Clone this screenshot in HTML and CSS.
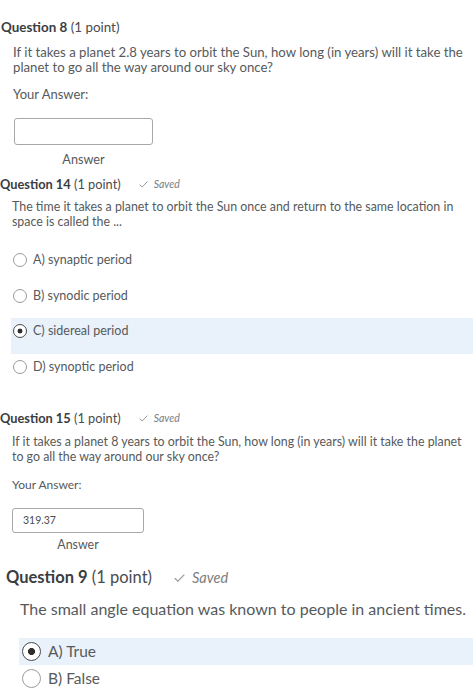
FILE: index.html
```html
<!DOCTYPE html>
<html lang="en">
<head>
  <meta charset="UTF-8">
  <meta name="viewport" content="width=device-width, initial-scale=1.0">
  <title>Quiz</title>
  <link rel="stylesheet" href="styles.css">
</head>
<body>
  <!-- Question 8 -->
  <div class="question q8">
    <div class="q-title"><b>Question 8</b> (1 point)</div>
    <p class="q-text">If it takes a planet 2.8 years to orbit the Sun, how long (in years) will it take the planet to go all the way around our sky once?</p>
    <p class="your-answer">Your Answer:</p>
    <div class="answer-box">
      <div class="answer-input"></div>
      <div class="answer-label">Answer</div>
    </div>
  </div>

  <!-- Question 14 -->
  <div class="question q14">
    <div class="q-title"><b>Question 14</b> (1 point)<span class="saved">
        <svg width="9" height="7" viewBox="0 0 9 7"><path d="M0.6 3.6 L3.2 6 L8.4 0.6" fill="none" stroke="#9a9a9a" stroke-width="1"/></svg>
        Saved
      </span></div>
    <p class="q-text">The time it takes a planet to orbit the Sun once and return to the same location in space is called the ...</p>
    <div class="options">
      <div class="option"><span class="radio"></span>A) synaptic period</div>
      <div class="option"><span class="radio"></span>B) synodic period</div>
      <div class="option selected"><span class="radio"></span>C) sidereal period</div>
      <div class="option"><span class="radio"></span>D) synoptic period</div>
    </div>
  </div>

  <!-- Question 15 -->
  <div class="question q15">
    <div class="q-title"><b>Question 15</b> (1 point)<span class="saved">
        <svg width="9" height="7" viewBox="0 0 9 7"><path d="M0.6 3.6 L3.2 6 L8.4 0.6" fill="none" stroke="#9a9a9a" stroke-width="1"/></svg>
        Saved
      </span></div>
    <p class="q-text">If it takes a planet 8 years to orbit the Sun, how long (in years) will it take the planet to go all the way around our sky once?</p>
    <p class="your-answer">Your Answer:</p>
    <div class="answer-box">
      <div class="answer-input">319.37</div>
      <div class="answer-label">Answer</div>
    </div>
  </div>

  <!-- Question 9 -->
  <div class="question q9">
    <div class="q-title"><b>Question 9</b> (1 point)<span class="saved">
        <svg width="11" height="8" viewBox="0 0 11 8"><path d="M0.7 4.2 L3.9 7.1 L10.3 0.7" fill="none" stroke="#9a9a9a" stroke-width="1.2"/></svg>
        Saved
      </span></div>
    <p class="q-text">The small angle equation was known to people in ancient times.</p>
    <div class="options">
      <div class="option selected"><span class="radio"></span>A) True</div>
      <div class="option"><span class="radio"></span>B) False</div>
    </div>
  </div>
</body>
</html>
```

FILE: styles.css
```css
body {
  font-family: Lato, "Open Sans", sans-serif;
  margin: 0;
  padding: 0;
  background-color: #fff;
  color: #565a5c;
}
p {
  margin: 0;
}
.q-title {
  color: #494c4e;
  white-space: nowrap;
}
.q-title b {
  color: #3a3d3f;
}
.saved {
  display: inline-flex;
  align-items: center;
  vertical-align: top;
  font-style: italic;
  color: #7a7d80;
}
.answer-box {
  display: flex;
  flex-direction: column;
  align-items: center;
  width: max-content;
}
.answer-input {
  box-sizing: border-box;
  border: 1px solid #a8a8a8;
  border-radius: 3px;
  background-color: #fff;
}
.option {
  display: flex;
  align-items: flex-start;
}
.option.selected {
  background-color: #e9f1fb;
}
.radio {
  box-sizing: border-box;
  flex-shrink: 0;
  border: 1px solid #9b9b9b;
  border-radius: 50%;
  background-color: #fff;
}
.selected .radio {
  border: 1.5px solid #4a4a4a;
  background: radial-gradient(circle, #2e2e2e 0, #2e2e2e 28%, #fff 31%);
}

/* question 8 */
.q8 {
  padding-top: 19px;
}
.q8 .q-title {
  font-size: 13.4px;
  line-height: 16px;
  margin-left: 1px;
}
.q8 .q-text {
  font-size: 13.2px;
  line-height: 14.5px;
  margin: 10px 6px 0 13px;
}
.q8 .your-answer {
  font-size: 13px;
  line-height: 14.5px;
  margin: 13px 0 0 13px;
}
.q8 .answer-box {
  margin: 16px 0 0 14px;
}
.q8 .answer-input {
  width: 139px;
  height: 27px;
}
.q8 .answer-label {
  font-size: 12.7px;
  line-height: 14.5px;
  margin-top: 7px;
}

/* question 14 */
.q14 {
  padding-top: 10px;
}
.q14 .q-title,
.q15 .q-title {
  font-size: 12.8px;
  line-height: 16px;
}
.q14 .saved,
.q15 .saved {
  font-size: 10.5px;
  line-height: 16px;
  margin-left: 18px;
}
.q14 .saved svg,
.q15 .saved svg {
  margin-right: 6px;
}
.q14 .q-text,
.q15 .q-text {
  font-size: 12.4px;
  line-height: 14.5px;
  margin: 8px 6px 0 12px;
}
.q14 .options {
  margin: 18px 0 0 11px;
}
.q14 .option {
  height: 35.5px;
  box-sizing: border-box;
  padding: 6px 0 0 2px;
  font-size: 12.5px;
  line-height: 14px;
}
.q14 .radio {
  width: 14px;
  height: 14px;
  margin-right: 6px;
}

/* question 15 */
.q15 {
  padding-top: 21px;
}
.q15 .q-text {
  margin-top: 9px;
}
.q15 .your-answer {
  font-size: 12px;
  line-height: 14.5px;
  margin: 14px 0 0 12px;
}
.q15 .answer-box {
  margin: 15px 0 0 12px;
}
.q15 .answer-input {
  width: 132px;
  height: 25px;
  padding-left: 10px;
  font-size: 10.5px;
  line-height: 23px;
  color: #494c4e;
}
.q15 .answer-label {
  font-size: 12.4px;
  line-height: 14.5px;
  margin-top: 5px;
}

/* question 9 */
.q9 {
  padding-top: 16px;
}
.q9 .q-title {
  font-size: 16.5px;
  line-height: 19px;
  margin-left: 6px;
}
.q9 .saved {
  font-size: 14.5px;
  line-height: 19px;
  margin-left: 22px;
}
.q9 .saved svg {
  margin-right: 7px;
}
.q9 .q-text {
  font-size: 16px;
  line-height: 19px;
  margin: 12px 0 0 20px;
  white-space: nowrap;
}
.q9 .options {
  margin: 19.5px 0 0 19px;
}
.q9 .option {
  height: 27px;
  align-items: center;
  padding-left: 3px;
  font-size: 15.5px;
}
.q9 .radio {
  width: 19px;
  height: 19px;
  margin-right: 7px;
}
```
